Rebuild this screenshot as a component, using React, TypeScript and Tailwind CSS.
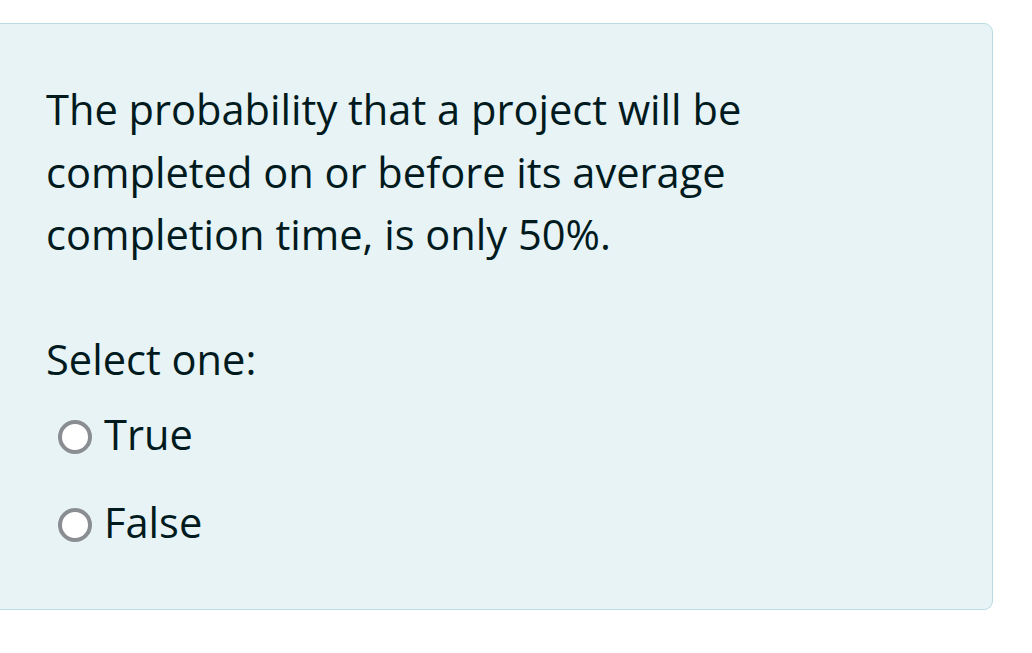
import React from "react";

function Radio({ label }: { label: string }) {
  return (
    <label className="flex items-start gap-[12px] h-[62.5px]">
      <span className="block mt-[17px] w-[34px] h-[34px] rounded-full border-[4px] border-[#8a8d91] bg-white shrink-0" />
      <span>{label}</span>
    </label>
  );
}

export default function App() {
  return (
    <div className="w-[1032px] h-[653px] bg-white" style={{ fontFamily: '"Open Sans", sans-serif' }}>
      <div className="mt-[23px] w-[993px] h-[587px] bg-[#e7f3f5] border border-l-0 border-[#b8dce2] rounded-r-[9px] text-[#001a1e] text-[41.6px] leading-[62.5px] pl-[46px] pt-[54px]">
        <p className="w-[800px]">
          The probability that a project will be completed on or before its average completion time, is only 50%.
        </p>
        <p className="mt-[62.5px]">Select one:</p>
        <div className="pl-[12px] flex flex-col gap-[25.5px] mt-[12.5px]">
          <Radio label="True" />
          <Radio label="False" />
        </div>
      </div>
    </div>
  );
}
